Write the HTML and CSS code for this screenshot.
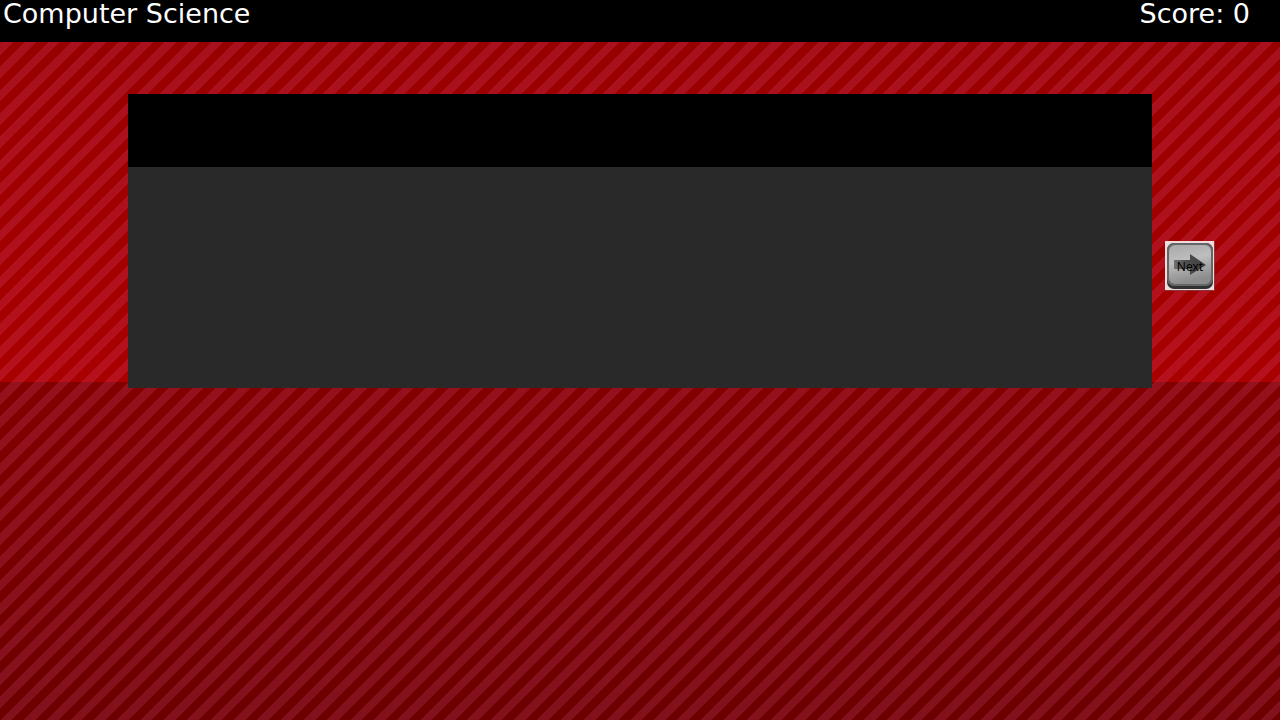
FILE: index.html
```
<!DOCTYPE html>
<html lang="en">
<head>
<meta charset="utf-8">
<title>Computer Science</title>
<link rel="stylesheet" href="styles.css">
</head>
<body>
<header class="bar">
  <span>Computer Science</span>
  <span>Score: 0</span>
</header>
<main class="stage">
  <section class="card">
    <div class="card-head"></div>
    <div class="card-body"></div>
  </section>
  <div class="side">
    <button class="next" type="button">
      <svg class="next-art" viewBox="0 0 50 50" aria-hidden="true">
        <defs>
          <linearGradient id="face" x1="0" y1="0" x2="0.25" y2="1">
            <stop offset="0" stop-color="#a8a8a8"/>
            <stop offset="0.45" stop-color="#bebebe"/>
            <stop offset="1" stop-color="#8c8c8c"/>
          </linearGradient>
          <linearGradient id="arrow" x1="0" y1="0" x2="1" y2="0">
            <stop offset="0" stop-color="#707070"/>
            <stop offset="0.4" stop-color="#4c4c4c"/>
            <stop offset="1" stop-color="#404040"/>
          </linearGradient>
        </defs>
        <rect width="50" height="50" fill="#8b3436"/>
        <rect width="49" height="49" fill="#f1dcdd"/>
        <rect x="2" y="2" width="46" height="46" rx="7" fill="#303232"/>
        <rect x="2" y="2" width="46" height="43" rx="7" fill="#646666"/>
        <rect x="4" y="4" width="42" height="39" rx="6" fill="url(#face)"/>
        <path d="M9 19H25V13L41 24L25 34V28H9Z" fill="url(#arrow)"/>
      </svg>
      <span class="next-label">Next</span>
    </button>
  </div>
</main>
</body>
</html>
```
FILE: styles.css
```
* {
  box-sizing: border-box;
}

body {
  margin: 0;
  min-height: 100vh;
  font-family: "DejaVu Sans", Verdana, sans-serif;
  background:
    repeating-linear-gradient(135deg, rgba(245, 105, 175, 0.16) 0 calc(100% / 12), transparent calc(100% / 12) calc(100% / 6)) -3px 0 / 70px 70px,
    linear-gradient(#960000 0, #a90000 53%, #830000 53%, #6c0000 100%);
}

.bar {
  display: flex;
  justify-content: space-between;
  height: 42px;
  padding: 0 30px 0 3px;
  background: #000;
  color: #fff;
  font-size: 27px;
  line-height: 28px;
}

.stage {
  display: grid;
  grid-template-columns: 1fr 8fr 1fr;
  padding-top: 52px;
}

.card {
  grid-column: 2;
}

.card-head {
  height: 73px;
  background: #000;
}

.card-body {
  height: 221px;
  background: #292929;
}

.side {
  padding: 147px 0 0 13px;
}

.next {
  display: grid;
  place-items: center;
  width: 50px;
  height: 50px;
  padding: 0;
  border: 0;
  background: none;
  color: #000;
  font-family: "Noto Sans", sans-serif;
  font-size: 12px;
}

.next-art,
.next-label {
  grid-area: 1 / 1;
}

.next-art {
  width: 50px;
  height: 50px;
}
```
